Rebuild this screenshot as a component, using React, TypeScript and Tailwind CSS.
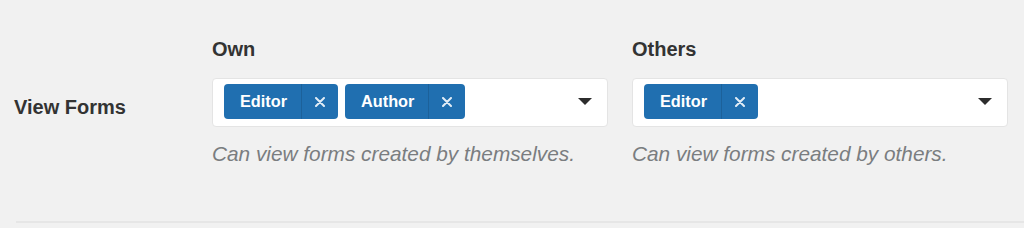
const TagX = () => (
  <svg width="10" height="10" viewBox="0 0 10 10" className="block">
    <path d="M1 1 L9 9 M9 1 L1 9" stroke="#e3edf6" strokeWidth="2" strokeLinecap="round" />
  </svg>
);

function Tag({ label }: { label: string }) {
  return (
    <div className="flex h-[35px] items-center rounded-[4px] bg-[#206fb0] text-[16.3px] font-bold text-white">
      <span className="pl-[16px] pr-[14px]">{label}</span>
      <span className="h-full w-px bg-[#1c619a]" />
      <span className="px-[13px]">
        <TagX />
      </span>
    </div>
  );
}

function RoleSelect({ title, tags, hint, width }: { title: string; tags: string[]; hint: string; width: string }) {
  return (
    <div className={width}>
      <div className="text-[20px] font-bold leading-[24px] text-[#333]">{title}</div>
      <div className="mt-[17px] flex h-[49px] items-start gap-[7px] rounded-[4px] border border-[#e4e4e4] bg-white pl-[11px] pr-[15px] pt-[5px]">
        {tags.map((t) => (
          <Tag key={t} label={t} />
        ))}
        <svg width="14" height="7" viewBox="0 0 14 7" className="ml-auto mt-[14px]">
          <path d="M0 0 L14 0 L7 7 Z" fill="#2c2c2c" />
        </svg>
      </div>
      <div className="mt-[15px] text-[20.8px] italic leading-[24px] text-[#7a7d80]">{hint}</div>
    </div>
  );
}

export default function App() {
  return (
    <div className="h-[228px] overflow-hidden bg-[#f1f1f1] pt-[37px] font-['Liberation_Sans',Arial,sans-serif]">
      <div className="flex pl-[14px]">
        <div className="w-[198px] pt-[58px] text-[20px] font-bold leading-[24px] text-[#333]">View Forms</div>
        <div className="flex gap-[24px]">
          <RoleSelect
            title="Own"
            tags={["Editor", "Author"]}
            hint="Can view forms created by themselves."
            width="w-[396px]"
          />
          <RoleSelect title="Others" tags={["Editor"]} hint="Can view forms created by others." width="w-[376px]" />
        </div>
      </div>
      <div className="ml-4 mt-[55px] border-t-2 border-[#e6e6e6]" />
    </div>
  );
}
